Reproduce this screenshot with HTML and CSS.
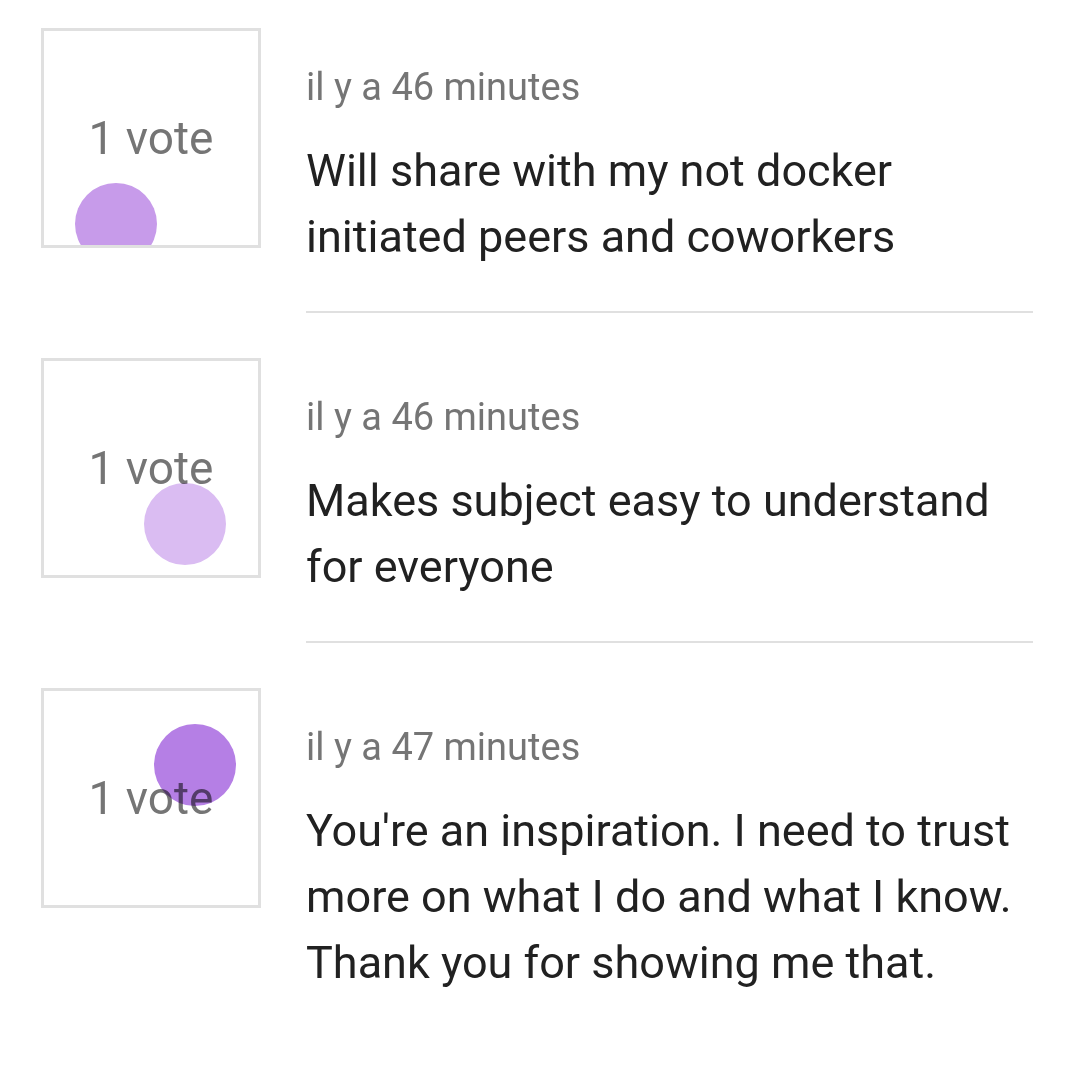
FILE: index.html
```html
<!DOCTYPE html>
<html lang="fr">
<head>
<meta charset="utf-8">
<title>Votes</title>
<link rel="stylesheet" href="styles.css">
</head>
<body>
<div class="list">
  <div class="item">
    <div class="vote-box">
      <span class="vote-label">1 vote</span>
      <span class="ripple ripple-a"></span>
    </div>
    <div class="content">
      <div class="time">il y a 46 minutes</div>
      <div class="text">Will share with my not docker initiated peers and coworkers</div>
    </div>
  </div>
  <div class="item">
    <div class="vote-box">
      <span class="vote-label">1 vote</span>
      <span class="ripple ripple-b"></span>
    </div>
    <div class="content">
      <div class="time">il y a 46 minutes</div>
      <div class="text">Makes subject easy to understand for everyone</div>
    </div>
  </div>
  <div class="item last">
    <div class="vote-box">
      <span class="vote-label">1 vote</span>
      <span class="ripple ripple-c"></span>
    </div>
    <div class="content">
      <div class="time">il y a 47 minutes</div>
      <div class="text">You're an inspiration. I need to trust more on what I do and what I know. Thank you for showing me that.</div>
    </div>
  </div>
</div>
</body>
</html>
```
FILE: styles.css
```css
html, body {
  margin: 0;
  background: #ffffff;
}
body {
  font-family: Roboto, "Noto Sans", sans-serif;
  width: 1080px;
  height: 1069px;
  overflow: hidden;
}
.list {
  padding-top: 28px;
}
.item {
  display: flex;
  align-items: flex-start;
  gap: 45px;
  padding: 0 47px 0 41px;
  margin-bottom: 45px;
}
.vote-box {
  position: relative;
  flex: 0 0 auto;
  width: 220px;
  height: 220px;
  box-sizing: border-box;
  border: 3px solid #e0e0e0;
  display: flex;
  align-items: center;
  justify-content: center;
  overflow: hidden;
}
.vote-label {
  font-size: 46px;
  color: #757575;
  line-height: 1;
}
.ripple {
  position: absolute;
  width: 82px;
  height: 82px;
  border-radius: 50%;
  mix-blend-mode: multiply;
}
.ripple-a {
  left: 31px;
  top: 152px;
  background: #c79bea;
}
.ripple-b {
  left: 100px;
  top: 122px;
  background: #dabcf2;
}
.ripple-c {
  left: 110px;
  top: 33px;
  background: #b57fe5;
}
.content {
  flex: 1;
  padding: 35px 0 41px;
  border-bottom: 2px solid #e0e0e0;
}
.item.last .content {
  border-bottom: none;
}
.time {
  font-size: 38px;
  line-height: 48px;
  color: #757575;
  margin-bottom: 27px;
}
.text {
  font-size: 45px;
  line-height: 66px;
  color: #212121;
}
```
